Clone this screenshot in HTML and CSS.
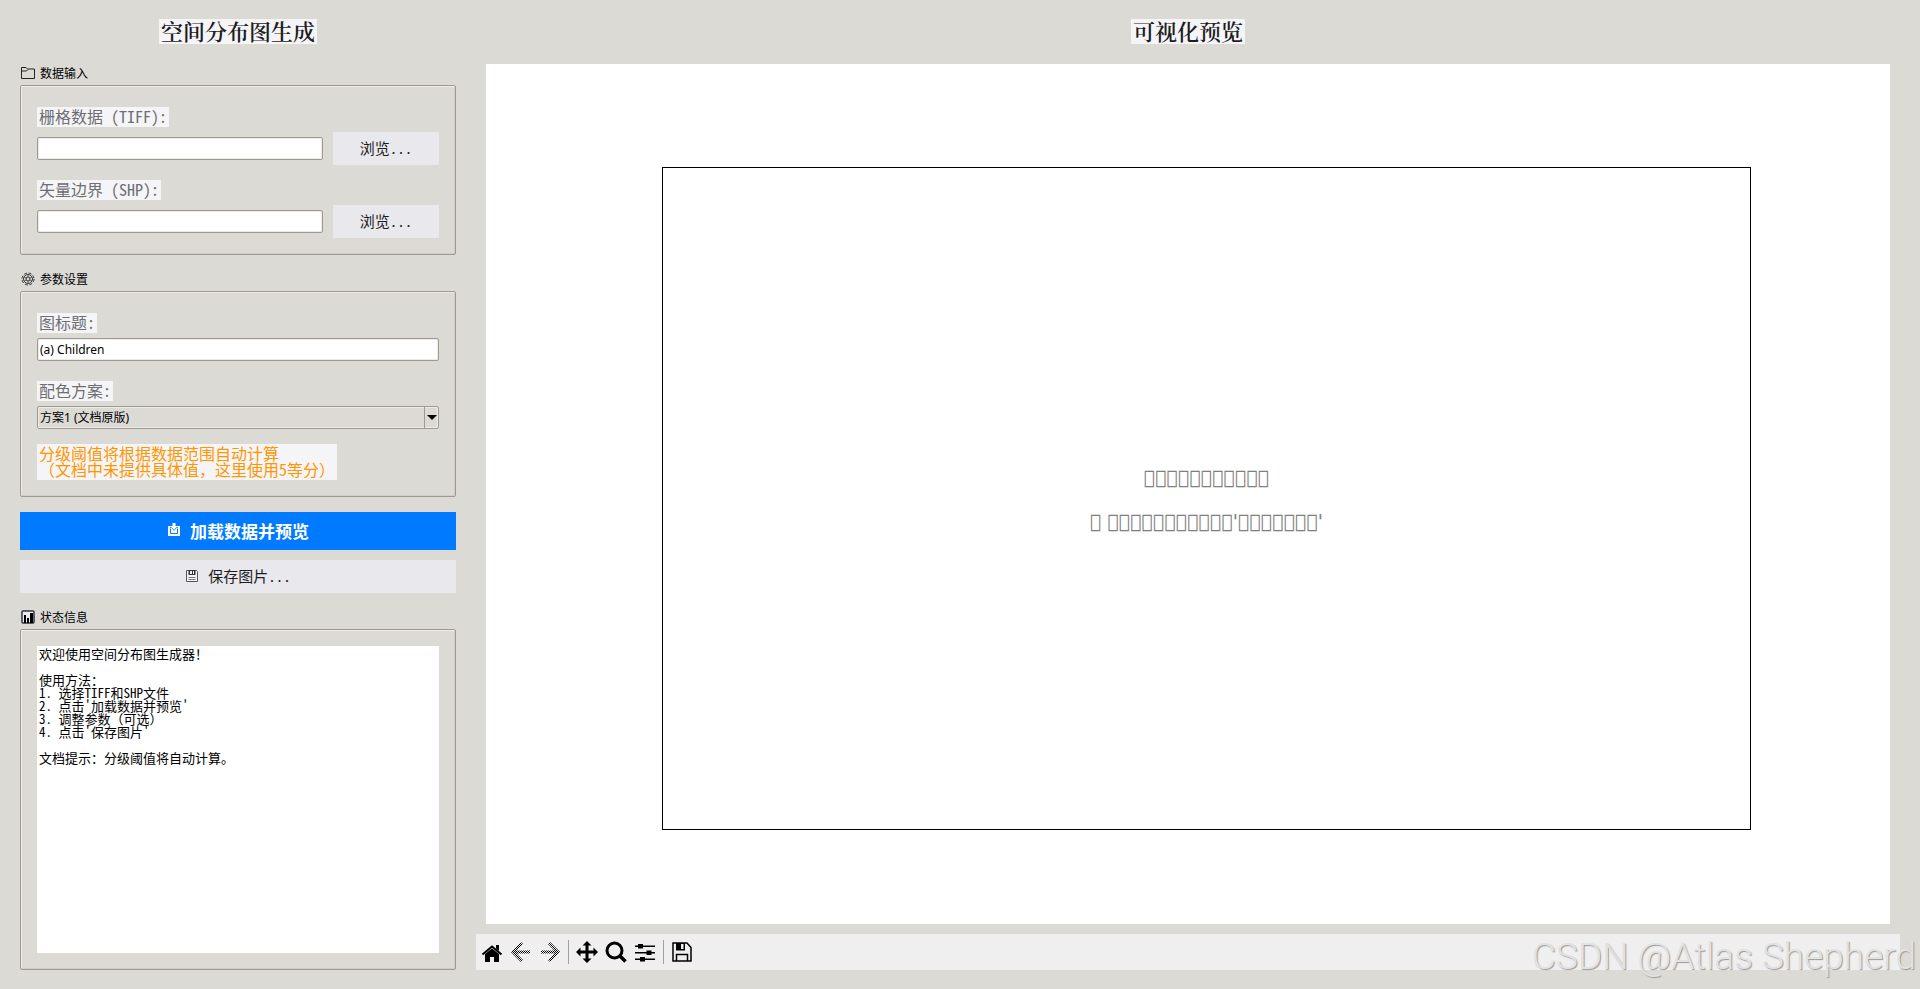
FILE: index.html
```html
<!DOCTYPE html>
<html lang="zh-CN">
	<head>
		<meta charset="UTF-8">
		<title>空间分布图生成</title>
		<link rel="stylesheet" href="styles.css">
	</head>
	<body>
		<div id="sidebar">
			<h1 class="title">空间分布图生成</h1>
			<fieldset class="group">
				<legend>
					<svg width="14" height="14" viewBox="0 0 14 14" fill="none" stroke="#222"><path d="M.5 12.500V1.500h4.500l1.500 1.500H13.500v9.500zM.5 5h5l1.500-1.500"/></svg>
					数据输入
				</legend>
				<div class="box">
					<label class="tag" for="tiff">栅格数据 (TIFF):</label>
					<div class="row">
						<input id="tiff" type="text" name="tiff">
						<button type="button" class="btn">浏览...</button>
					</div>
					<label class="tag" for="shp">矢量边界 (SHP):</label>
					<div class="row">
						<input id="shp" type="text" name="shp">
						<button type="button" class="btn">浏览...</button>
					</div>
				</div>
			</fieldset>
			<fieldset class="group params">
				<legend>
					<svg width="14" height="14" viewBox="0 0 14 14" fill="none" stroke="#333"><circle cx="7" cy="7" r="6" stroke-width="1" stroke-dasharray="3 1.700"/><circle cx="7" cy="7" r="4.500"/><circle cx="7" cy="7" r="2"/><path d="M7 2.500V5M7 9v2.500M3 5l2.500 1M8.500 8L11 9M3 9l2.500-1M8.500 6L11 5" stroke-width=".7"/></svg>
					参数设置
				</legend>
				<div class="box">
					<label class="tag" for="caption">图标题:</label>
					<input id="caption" type="text" name="caption" value="(a) Children">
					<label class="tag" for="scheme">配色方案:</label>
					<div class="combo">
						<select id="scheme" name="scheme">
							<option>方案1 (文档原版)</option>
						</select>
						<span class="arrow"></span>
					</div>
					<p class="tag hint">分级阈值将根据数据范围自动计算<br>（文档中未提供具体值，这里使用5等分）</p>
				</div>
			</fieldset>
			<button type="button" class="btn primary">
				<svg width="14" height="14" viewBox="0 0 14 14"><path d="M1 3h12v10H1z" fill="#fff"/><path d="M3.500 5v5.500h7V5" fill="none" stroke="#007aff"/><path d="M5.500 0h3v5H11L7 9 3 5h2.500z" fill="#fff"/><path d="M3 4.500h1.500L7 7.500l2.500-3H11" fill="none" stroke="#007aff" stroke-width=".8"/></svg>
				加载数据并预览
			</button>
			<button type="button" class="btn save">
				<svg width="14" height="14" viewBox="0 0 14 14"><path d="M1.500 1.500h10l1 1v10h-11z" fill="#f4f4f4" stroke="#555"/><path d="M3.500 1h7v5h-7z" fill="#333"/><path d="M5 2h2v3H5zM8 2h1v3H8z" fill="#eee"/><path d="M3.500 8.500h7M3.500 10.500h7" stroke="#777"/></svg>
				保存图片...
			</button>
			<fieldset class="group status">
				<legend>
					<svg width="14" height="14" viewBox="0 0 14 14"><rect x="1" y="1" width="12" height="12" rx="1" fill="#eee" stroke="#334" stroke-width="1.500"/><path d="M3 5h2v8H3zM6 8h2v5H6zM9 3h3v10H9z" fill="#000"/></svg>
					状态信息
				</legend>
				<div class="box">
					<textarea id="log" aria-label="状态信息" spellcheck="false">
欢迎使用空间分布图生成器！

使用方法：
1. 选择TIFF和SHP文件
2. 点击'加载数据并预览'
3. 调整参数（可选）
4. 点击'保存图片'

文档提示：分级阈值将自动计算。</textarea>
				</div>
			</fieldset>
		</div>
		<div id="preview">
			<h1 class="title">可视化预览</h1>
			<div class="canvas">
				<div class="axes">
					<p>&#xF0000;&#xF0000;&#xF0000;&#xF0000;&#xF0000;&#xF0000;&#xF0000;&#xF0000;&#xF0000;&#xF0000;&#xF0000;</p>
					<p>&#xF0000; &#xF0000;&#xF0000;&#xF0000;&#xF0000;&#xF0000;&#xF0000;&#xF0000;&#xF0000;&#xF0000;&#xF0000;&#xF0000;'&#xF0000;&#xF0000;&#xF0000;&#xF0000;&#xF0000;&#xF0000;&#xF0000;'</p>
				</div>
			</div>
			<div class="toolbar">
				<button type="button" aria-label="Home">
					<svg width="24" height="24" viewBox="0 0 24 24"><path d="M12 8.500l7 5.500V22h-5v-5h-4v5H5v-8z"/><path d="M2.500 14.500L12 6.500l9.500 8" fill="none" stroke="#000" stroke-width="2"/><path d="M16 5h3v6l-3-2.500z"/></svg>
				</button>
				<button type="button" aria-label="Back" disabled>
					<svg width="24" height="24" viewBox="0 0 24 24" fill="none" stroke="url(#dither)" stroke-width="3">
						<defs>
							<pattern id="dither" width="2" height="2" patternUnits="userSpaceOnUse">
								<path d="M0 0h1v1H0zM1 1h1v1H1z" fill="#000" stroke="none"/>
							</pattern>
						</defs>
						<path d="M13 3l-9 9 9 9M4 12.010L21 12"/>
					</svg>
				</button>
				<button type="button" aria-label="Forward" disabled>
					<svg width="24" height="24" viewBox="0 0 24 24" fill="none" stroke="url(#dither)" stroke-width="3"><path d="M11 3l9 9-9 9M20 12.010L3 12"/></svg>
				</button>
				<span class="sep"></span>
				<button type="button" aria-label="Pan">
					<svg width="24" height="24" viewBox="0 0 24 24"><path d="M12 1l4.500 4.500h-3v5h5v-3L23 12l-4.500 4.500v-3h-5v5h3L12 23l-4.500-4.500h3v-5h-5v3L1 12l4.500-4.500v3h5v-5h-3z"/></svg>
				</button>
				<button type="button" aria-label="Zoom">
					<svg width="24" height="24" viewBox="0 0 24 24" fill="none" stroke="#000"><circle cx="10.500" cy="10.500" r="7.500" stroke-width="3"/><path d="M16 16l5.500 5.500" stroke-width="3.500"/></svg>
				</button>
				<button type="button" aria-label="Subplots">
					<svg width="24" height="24" viewBox="0 0 24 24"><path d="M2 5.500h20v1.500H2zM2 12h20v1.500H2zM2 18.500h20V20H2z"/><path d="M5 4h5v4.500H5zM13.500 10.500h5V15h-5zM7 17h5v4.500H7z"/></svg>
				</button>
				<span class="sep"></span>
				<button type="button" aria-label="Save">
					<svg width="24" height="24" viewBox="0 0 24 24"><path d="M3 3h14l4 4.500V21H3zM6.500 21v-6.500h11V21" fill="none" stroke="#000" stroke-width="1.500"/><path d="M6 3h9v7.500H6z"/><path d="M11 4h2.500v5H11z" fill="#efefef"/></svg>
				</button>
			</div>
		</div>
		<div id="watermark">CSDN @Atlas Shepherd</div>
	</body>
</html>
```
FILE: styles.css
```css
* {
	margin: 0;
	padding: 0;
	box-sizing: border-box;
}
body {
	display: flex;
	gap: 20px;
	min-height: 100vh;
	padding: 19px 20px;
	background-color: #dbdad5;
	color: #000;
	font-family: "Noto Sans CJK SC", sans-serif;
	font-size: 12px;
}
#sidebar {
	display: flex;
	flex-direction: column;
	flex: none;
	width: 436px;
}
#preview {
	display: flex;
	flex-direction: column;
	flex: 1;
}
.title {
	align-self: center;
	padding: 0 2px 2px;
	background-color: #f5f5f8;
	color: #1d1d1f;
	font-family: "Noto Serif CJK SC", "Noto Sans CJK SC", serif;
	font-size: 22px;
	font-weight: 600;
	line-height: 23px;
}
#sidebar .title {
	margin-bottom: 20px;
}
.group {
	display: flex;
	flex-direction: column;
	border: none;
}
.group legend {
	display: flex;
	align-items: center;
	gap: 5px;
	height: 21px;
	padding: 0 1px 4px;
	line-height: 17px;
}
.box {
	display: flex;
	flex-direction: column;
	padding: 21px 16px 16px;
	border: 1px solid #9e9a91;
	border-radius: 2px;
	box-shadow: inset 1px 1px #eeebe7, inset -1px -1px #cfcdc8;
}
.tag {
	align-self: flex-start;
	padding: 0 2px 2px;
	background-color: #f5f5f8;
	color: #6e6e73;
	font-family: "Noto Sans Mono CJK SC", "Noto Sans CJK SC", monospace;
	font-size: 16px;
	line-height: 18px;
}
.row {
	display: flex;
	align-items: center;
	gap: 10px;
	padding: 5px 0 15px;
}
.row:last-child {
	padding-bottom: 0;
}
input[type=text], select {
	width: 100%;
	height: 23px;
	padding: 0 2px 1px;
	border: 1px solid #9e9a91;
	border-radius: 2px;
	outline: none;
	background-color: #fff;
	box-shadow: inset 1px 1px #eeebe7, inset -1px -1px #eeebe7;
	color: #000;
	font-family: "Noto Sans", "Noto Sans CJK SC", sans-serif;
	font-size: 12px;
}
.row input[type=text] {
	flex: 1;
	width: auto;
}
.btn {
	padding-bottom: 2px;
	border: none;
	background-color: #e8e8ed;
	color: #1d1d1f;
	font-family: "Noto Sans Mono CJK SC", "Noto Sans CJK SC", monospace;
	font-size: 15px;
}
.row .btn {
	width: 106px;
	height: 33px;
}
.params {
	margin-top: 15px;
}
#caption {
	margin: 5px 0 20px;
}
.combo {
	position: relative;
	margin: 5px 0 15px;
}
select {
	display: block;
	appearance: none;
	background-color: #dbdad5;
}
.arrow {
	position: absolute;
	top: 1px;
	right: 1px;
	bottom: 1px;
	display: grid;
	place-items: center;
	width: 14px;
	border-left: 1px solid #9e9a91;
	pointer-events: none;
}
.arrow::after {
	content: "";
	border: 5px solid transparent;
	border-top-color: #000;
	border-bottom: none;
}
.hint {
	padding: 1px 2px 3px;
	color: #ff9500;
	line-height: 16px;
}
.primary, .save {
	display: flex;
	align-items: center;
	justify-content: center;
	gap: 9px;
	height: 33px;
	margin-top: 10px;
}
.primary {
	height: 38px;
	margin-top: 15px;
	background-color: #007aff;
	color: #fff;
	font-size: 17px;
	font-weight: bold;
}
.status {
	flex: 1;
	margin-top: 15px;
}
.status .box {
	flex: 1;
	padding-top: 16px;
}
#log {
	flex: 1;
	min-height: 307px;
	padding: 1px 2px;
	border: none;
	outline: none;
	resize: none;
	color: #000;
	font-family: "Noto Sans Mono CJK SC", "Noto Sans CJK SC", monospace;
	font-size: 13px;
	line-height: 13px;
}
.canvas {
	display: flex;
	flex: 1;
	margin: 20px 10px 10px;
	padding: 103px 139px 94px 176px;
	background-color: #fff;
}
.axes {
	display: flex;
	flex-direction: column;
	flex: 1;
	align-items: center;
	justify-content: center;
	gap: 20px;
	border: 1px solid #000;
	color: #808080;
	font-family: "DejaVu Sans", sans-serif;
	font-size: 19px;
	line-height: 24px;
}
.toolbar {
	display: flex;
	align-items: center;
	gap: 5px;
	height: 36px;
	padding: 0 4px;
	background-color: #efefef;
}
.toolbar button {
	width: 24px;
	height: 24px;
	border: none;
	background: none;
}
.toolbar svg {
	display: block;
}
.sep {
	width: 1px;
	height: 24px;
	margin: 0 1px;
	background-color: #a0a0a0;
}
#watermark {
	position: absolute;
	right: 4px;
	bottom: 11px;
	color: #e2e2e2;
	font-family: Roboto, "Liberation Sans", sans-serif;
	font-size: 37px;
	font-weight: 300;
	line-height: 42px;
	text-shadow: 1px 1px 1px #999;
	pointer-events: none;
}
```
